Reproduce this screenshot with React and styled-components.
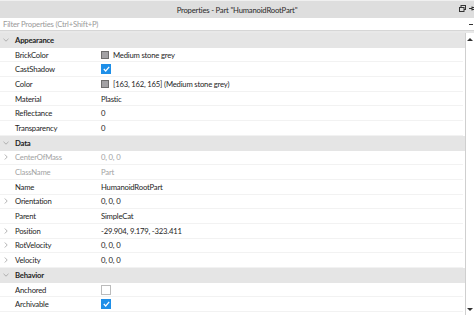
import styled, { createGlobalStyle } from "styled-components";

const Global = createGlobalStyle`
  html, body { margin: 0; padding: 0; background: #fff; }
  body { font-family: Lato, "Noto Sans", sans-serif; }
`;

const sections = [
  {
    name: "Appearance",
    rows: [
      { label: "BrickColor", value: "Medium stone grey", swatch: true },
      { label: "CastShadow", check: true },
      { label: "Color", value: "[163, 162, 165] (Medium stone grey)", swatch: true },
      { label: "Material", value: "Plastic" },
      { label: "Reflectance", value: "0" },
      { label: "Transparency", value: "0" },
    ],
  },
  {
    name: "Data",
    rows: [
      { label: "CenterOfMass", value: "0, 0, 0", muted: true, expand: true },
      { label: "ClassName", value: "Part", muted: true },
      { label: "Name", value: "HumanoidRootPart" },
      { label: "Orientation", value: "0, 0, 0", expand: true },
      { label: "Parent", value: "SimpleCat" },
      { label: "Position", value: "-29.904, 9.179, -323.411", expand: true },
      { label: "RotVelocity", value: "0, 0, 0", expand: true },
      { label: "Velocity", value: "0, 0, 0", expand: true },
    ],
  },
  {
    name: "Behavior",
    rows: [
      { label: "Anchored", check: false },
      { label: "Archivable", check: true },
    ],
  },
];

const Window = styled.div`
  width: 474px;
  height: 315px;
  display: flex;
  flex-direction: column;
  background: #e8e8e8;
  overflow: hidden;
  font-size: 7.7px;
  letter-spacing: -0.2px;
  color: #1e1e1e;
`;

const TitleBar = styled.div`
  height: 17px;
  display: flex;
  align-items: center;
  justify-content: center;
  position: relative;
  background: #dedede;
  border-top: 1px solid #f0f0f0;
  color: #2a2a2a;
`;

const TitleIcons = styled.div`
  position: absolute;
  right: 0;
  top: 4px;
  display: flex;
  gap: 3px;
  align-items: center;
`;

const FilterBar = styled.div`
  height: 12px;
  display: flex;
  align-items: center;
  justify-content: space-between;
  background: #fff;
  padding-left: 3px;
  color: #9a9a9a;
  border-bottom: 1px solid #d6d6d6;
`;

const Dash = styled.span`
  width: 4px;
  height: 1px;
  background: #333;
  margin-right: 1px;
`;

const Body = styled.div`
  flex: 1;
  display: flex;
  margin-top: 2px;
  background: #fff;
`;

const List = styled.div`
  flex: 1;
  display: flex;
  flex-direction: column;
`;

const Row = styled.div`
  height: 14.7px;
  flex-shrink: 0;
  display: grid;
  grid-template-columns: 100px 1fr;
  align-items: center;
  background: ${(p) => (p.header ? "#e5e5e5" : "#fff")};
  border-bottom: ${(p) => (p.header ? "none" : "1px solid #f2f2f2")};
  box-sizing: border-box;
  margin-right: ${(p) => (p.header ? "0" : "2px")};
`;

const LabelCell = styled.div`
  display: flex;
  align-items: center;
  height: 100%;
  color: ${(p) => (p.muted ? "#a3a3a3" : "#1e1e1e")};
  font-weight: ${(p) => (p.header ? 700 : 400)};
`;

const Chevron = styled.span`
  width: 11px;
  margin-right: 4px;
  display: flex;
  justify-content: center;
  color: #9a9a9a;
`;

const ValueCell = styled.div`
  display: flex;
  align-items: center;
  gap: 4px;
  height: 100%;
  padding-left: 1px;
  color: ${(p) => (p.muted ? "#a3a3a3" : "#1e1e1e")};
`;

const Swatch = styled.span`
  width: 6px;
  height: 6px;
  background: #a3a2a5;
  border: 1px solid #6e6e6e;
`;

const Check = styled.span`
  width: 8px;
  height: 8px;
  display: flex;
  align-items: center;
  justify-content: center;
  background: ${(p) => (p.on ? "#1e8fe8" : "#fff")};
  border: 1px solid ${(p) => (p.on ? "#1e8fe8" : "#bcbcbc")};
`;

const Scroll = styled.div`
  width: 8px;
  display: flex;
  flex-direction: column;
  justify-content: space-between;
  align-items: center;
  border-left: 1px solid #cfcfcf;
  background: #fff;
  padding: 5px 0 4px;
`;

const ChevronDown = () => (
  <svg width="6" height="4" viewBox="0 0 6 4">
    <path d="M0.5 0.8 L3 3.2 L5.5 0.8" stroke="#a0a0a0" fill="none" strokeWidth="0.8" />
  </svg>
);

const ChevronRight = () => (
  <svg width="4" height="6" viewBox="0 0 4 6">
    <path d="M0.8 0.5 L3.2 3 L0.8 5.5" stroke="#a0a0a0" fill="none" strokeWidth="0.8" />
  </svg>
);

const Tick = () => (
  <svg width="7" height="6" viewBox="0 0 7 6">
    <path d="M0.8 3 L2.7 5 L6.2 0.8" stroke="#fff" fill="none" strokeWidth="1.2" />
  </svg>
);

const Arrow = ({ up }) => (
  <svg width="6" height="3" viewBox="0 0 6 3">
    <path d={up ? "M0 3 L3 0 L6 3 Z" : "M0 0 L6 0 L3 3 Z"} fill="#333" />
  </svg>
);

const App = () => {
  return (
    <Window>
      <Global />
      <TitleBar>
        Properties - Part "HumanoidRootPart"
        <TitleIcons>
          <svg width="7" height="7" viewBox="0 0 7 7">
            <rect x="2" y="0.5" width="4.5" height="4" fill="none" stroke="#333" strokeWidth="1" />
            <rect x="0.5" y="2.5" width="4.5" height="4" fill="#dedede" stroke="#333" strokeWidth="1" />
          </svg>
          <svg width="5" height="7" viewBox="0 0 5 7">
            <path d="M0 3.5 H3 M3 1.5 V5.5 M3 2.5 H5 M3 4.5 H5" stroke="#333" strokeWidth="1" />
          </svg>
        </TitleIcons>
      </TitleBar>
      <FilterBar>
        Filter Properties (Ctrl+Shift+P)
        <Dash />
      </FilterBar>
      <Body>
        <List>
          {sections.map((s) => (
            <div key={s.name} style={{ display: "contents" }}>
              <Row header>
                <LabelCell header>
                  <Chevron>
                    <ChevronDown />
                  </Chevron>
                  {s.name}
                </LabelCell>
                <ValueCell />
              </Row>
              {s.rows.map((r) => (
                <Row key={r.label}>
                  <LabelCell muted={r.muted}>
                    <Chevron>{r.expand && <ChevronRight />}</Chevron>
                    {r.label}
                  </LabelCell>
                  <ValueCell muted={r.muted}>
                    {r.swatch && <Swatch />}
                    {r.check !== undefined && <Check on={r.check}>{r.check && <Tick />}</Check>}
                    {r.value}
                  </ValueCell>
                </Row>
              ))}
            </div>
          ))}
        </List>
        <Scroll>
          <Arrow up />
          <Arrow />
        </Scroll>
      </Body>
    </Window>
  );
};

export default App;
